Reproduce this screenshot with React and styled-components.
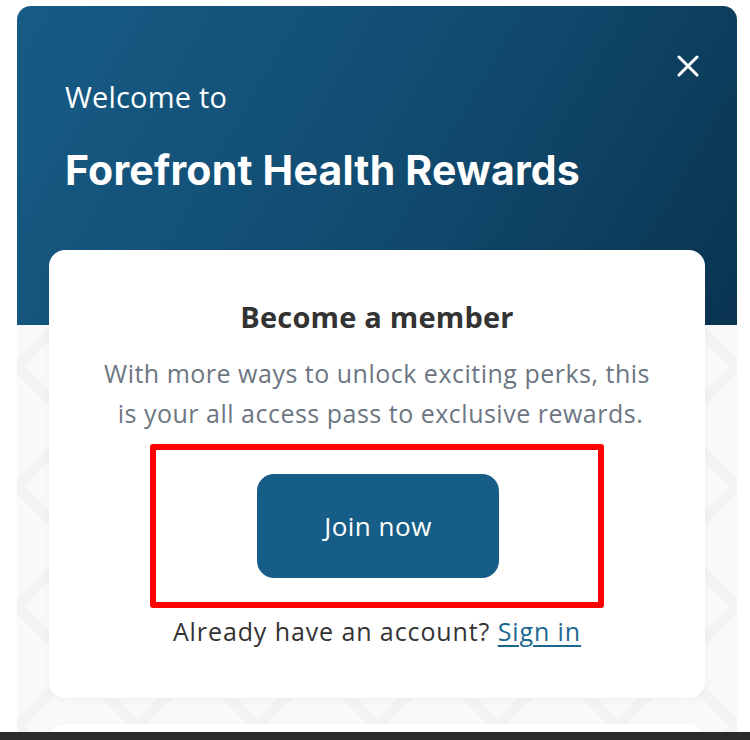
import React from 'react';
import styled, { createGlobalStyle } from 'styled-components';

const GlobalStyle = createGlobalStyle`
    html, body {
        margin: 0;
        padding: 0;
        height: 740px;
        overflow: hidden;
        background: #ffffff;
    }
    body {
        font-family: "Open Sans", "Liberation Sans", sans-serif;
    }
`;

const Page = styled.div`
    padding: 6px 13px 0 17px;
`;

const Modal = styled.div`
    width: 720px;
    height: 726px;
    border-radius: 14px 14px 0 0;
    overflow: hidden;
    background-color: #f9f9f9;
    background-image:
        linear-gradient(135deg, transparent 47%, #f3f3f3 47%, #f3f3f3 53%, transparent 53%),
        linear-gradient(45deg, transparent 47%, #f3f3f3 47%, #f3f3f3 53%, transparent 53%);
    background-size: 120px 120px;
`;

const Header = styled.div`
    position: relative;
    height: 319px;
    box-sizing: border-box;
    padding: 71px 48px 0 48px;
    background: linear-gradient(120deg, #175c86 0%, #114a6f 55%, #0a3450 100%);
    color: #ffffff;
`;

const Welcome = styled.p`
    margin: 0;
    font-family: "Open Sans", "Liberation Sans", sans-serif;
    font-size: 29px;
    line-height: 40px;
    font-weight: 400;
    letter-spacing: 0.2px;
`;

const Title = styled.h1`
    margin: 29px 0 0 0;
    font-family: Inter, "Liberation Sans", sans-serif;
    font-size: 41px;
    line-height: 48px;
    font-weight: 700;
    letter-spacing: 0.2px;
`;

const CloseButton = styled.button`
    position: absolute;
    top: 40px;
    right: 29px;
    width: 40px;
    height: 40px;
    padding: 0;
    border: none;
    background: transparent;
    display: flex;
    align-items: center;
    justify-content: center;
    cursor: pointer;
`;

const Body = styled.div`
    position: relative;
    z-index: 1;
    padding: 0 32px;
    display: flex;
    flex-direction: column;
    gap: 26px;
    margin-top: -75px;
`;

const Card = styled.div`
    background: #ffffff;
    border-radius: 16px;
    box-shadow: 0 2px 10px rgba(0, 0, 0, 0.04);
    height: ${(p) => p.$height}px;
    box-sizing: border-box;
    padding: ${(p) => (p.$padded ? '46px 20px 0 20px' : '0')};
    display: flex;
    flex-direction: column;
    align-items: center;
`;

const CardTitle = styled.h2`
    margin: 0;
    font-family: "Open Sans", "Liberation Sans", sans-serif;
    font-size: 29px;
    line-height: 42px;
    font-weight: 700;
    color: #333333;
    letter-spacing: 0.2px;
`;

const Lead = styled.p`
    margin: 15px 0 0 0;
    font-family: "Open Sans", "Liberation Sans", sans-serif;
    font-size: 25px;
    line-height: 40px;
    font-weight: 400;
    color: #6c7682;
    text-align: center;
    letter-spacing: 0.5px;
`;

const Highlight = styled.div`
    margin-top: 11px;
    width: 454px;
    height: 164px;
    box-sizing: border-box;
    border: 6px solid #ff0000;
    border-radius: 3px;
    display: flex;
    align-items: center;
    justify-content: center;
`;

const JoinButton = styled.button`
    width: 242px;
    height: 104px;
    margin-left: 2px;
    border: none;
    border-radius: 17px;
    background: #165e87;
    color: #ffffff;
    font-family: "Open Sans", "Liberation Sans", sans-serif;
    font-size: 26px;
    font-weight: 400;
    letter-spacing: 0.5px;
    cursor: pointer;
`;

const SignInLine = styled.p`
    margin: 3px 0 0 0;
    font-family: "Open Sans", "Liberation Sans", sans-serif;
    font-size: 25px;
    line-height: 40px;
    color: #333333;
    letter-spacing: 0.9px;
`;

const SignInLink = styled.a`
    color: #1d6892;
    text-decoration: underline;
    text-underline-offset: 4px;
    text-decoration-thickness: 2px;
`;

const BottomBar = styled.div`
    position: fixed;
    left: 0;
    right: 0;
    bottom: 0;
    height: 8px;
    background: #2c2c2c;
`;

const CloseIcon = () => (
    <svg width="22" height="22" viewBox="0 0 22 22" fill="none">
        <path d="M2 2L20 20M20 2L2 20" stroke="#ffffff" strokeWidth="3" strokeLinecap="round" />
    </svg>
);

const App = () => (
    <>
        <GlobalStyle />
        <Page>
            <Modal>
                <Header>
                    <Welcome>Welcome to</Welcome>
                    <Title>Forefront Health Rewards</Title>
                    <CloseButton aria-label="Close">
                        <CloseIcon />
                    </CloseButton>
                </Header>
                <Body>
                    <Card $height={448} $padded>
                        <CardTitle>Become a member</CardTitle>
                        <Lead>
                            With more ways to unlock exciting perks, this
                            <br />
                            &nbsp;is your all access pass to exclusive rewards.
                        </Lead>
                        <Highlight>
                            <JoinButton>Join now</JoinButton>
                        </Highlight>
                        <SignInLine>
                            Already have an account? <SignInLink href="#">Sign in</SignInLink>
                        </SignInLine>
                    </Card>
                    <Card $height={120} />
                </Body>
            </Modal>
        </Page>
        <BottomBar />
    </>
);

export default App;
